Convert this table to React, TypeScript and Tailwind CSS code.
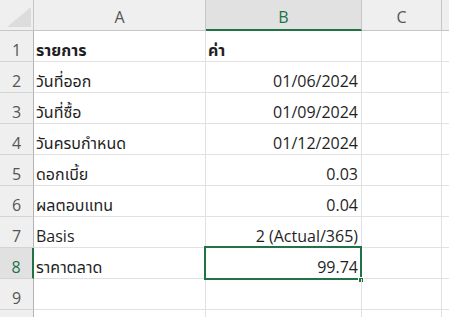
import React from "react";

const FONT = '"Open Sans", "Noto Sans", "Noto Sans Thai", "Leelawadee UI", Tahoma, sans-serif';

type Row = { a: string; b: string; bold?: boolean; alignB?: "left" | "right" };

const rows: Row[] = [
  { a: "รายการ", b: "ค่า", bold: true, alignB: "left" },
  { a: "วันที่ออก", b: "01/06/2024" },
  { a: "วันที่ซื้อ", b: "01/09/2024" },
  { a: "วันครบกำหนด", b: "01/12/2024" },
  { a: "ดอกเบี้ย", b: "0.03" },
  { a: "ผลตอบแทน", b: "0.04" },
  { a: "Basis", b: "2 (Actual/365)" },
  { a: "ราคาตลาด", b: "99.74" },
  { a: "", b: "" },
  { a: "", b: "" },
];

export default function App() {
  return (
    <div
      className="w-[449px] h-[317px] overflow-hidden bg-white text-[16px] text-[#1f1f1f]"
      style={{ fontFamily: FONT }}
    >
      <div className="grid grid-cols-[34px_172px_156px_80px_1fr]">
        {/* header row */}
        <div className="h-[31px] bg-[#efefef] border-r border-b border-[#c6c6c6] relative">
          <svg className="absolute left-[7px] top-[7px]" width="24" height="20" viewBox="0 0 24 20">
            <polygon points="24,0 24,20 0,20" fill="#dcdcdc" />
          </svg>
        </div>
        <div className="h-[31px] bg-[#efefef] border-r border-b border-[#c6c6c6] flex items-end justify-center pb-[2px] leading-[22px] text-[#555]">
          A
        </div>
        <div className="h-[31px] bg-[#e1e1e1] border-r border-[#c6c6c6] border-b-2 border-b-[#217346] flex items-end justify-center pb-[1px] leading-[22px] text-[#217346]">
          B
        </div>
        <div className="h-[31px] bg-[#efefef] border-r border-b border-[#c6c6c6] flex items-end justify-center pb-[2px] leading-[22px] text-[#555]">
          C
        </div>
        <div className="h-[31px] bg-[#efefef] border-b border-[#c6c6c6]" />

        {rows.map((r, i) => {
          const sel = i === 7;
          return (
            <React.Fragment key={i}>
              <div
                className={
                  sel
                    ? "h-[31px] bg-[#e1e1e1] border-r-2 border-r-[#217346] border-b border-b-[#d4d4d4] flex items-end justify-center leading-[22px] text-[#217346]"
                    : "h-[31px] bg-[#efefef] border-r border-r-[#b4b4b4] border-b border-b-[#d4d4d4] flex items-end justify-center leading-[22px] text-[#555]"
                }
              >
                {i < 9 ? i + 1 : ""}
              </div>
              <div
                className={
                  "h-[31px] border-r border-b border-[#e1e1e1] flex items-end pl-[2px] leading-[22px] whitespace-nowrap" +
                  (r.bold ? " font-bold" : "")
                }
              >
                {r.a}
              </div>
              <div
                className={
                  "relative h-[31px] border-r border-b border-[#e1e1e1] flex items-end leading-[22px] whitespace-nowrap" +
                  (r.alignB === "left" ? " justify-start pl-[2px]" : " justify-end pr-[3px]") +
                  (r.bold ? " font-bold" : "")
                }
              >
                {r.b}
                {sel && (
                  <>
                    <div className="absolute left-[-2px] top-[-2px] right-[-1px] bottom-[-2px] border-2 border-[#217346]" />
                    <div className="absolute right-[-3px] bottom-[-5px] w-[6px] h-[6px] bg-[#217346] border border-white" />
                  </>
                )}
              </div>
              <div className="h-[31px] border-r border-b border-[#e1e1e1]" />
              <div className="h-[31px] border-b border-[#e1e1e1]" />
            </React.Fragment>
          );
        })}
      </div>
    </div>
  );
}
